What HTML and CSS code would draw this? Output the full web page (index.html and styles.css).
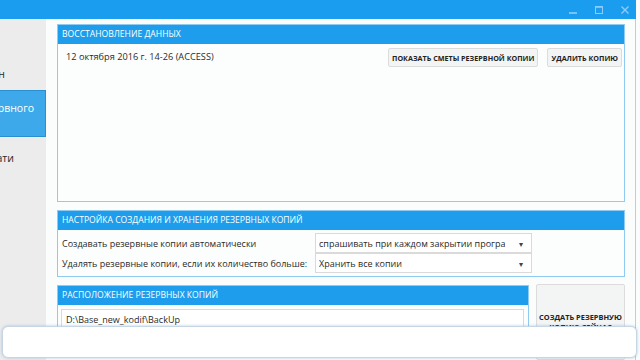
FILE: index.html
```html
<!DOCTYPE html>
<html lang="ru">
<head>
    <meta charset="UTF-8">
    <title>Резервное копирование</title>
    <link rel="stylesheet" href="styles.css">
</head>
<body>

    <div class="window">
        <!-- Title bar -->
        <div class="titlebar">
            <svg class="tb-icon" width="12" height="12" viewBox="0 0 12 12"><path d="M2 9h8" stroke="#fff" stroke-width="1.6"/></svg>
            <svg class="tb-icon" width="12" height="12" viewBox="0 0 12 12"><rect x="2.5" y="2.5" width="7" height="7" fill="none" stroke="#fff" stroke-width="1"/><path d="M2.5 3h7" stroke="#fff" stroke-width="1.6"/></svg>
            <svg class="tb-icon" width="12" height="12" viewBox="0 0 12 12"><path d="M2.5 2.5l7 7M9.5 2.5l-7 7" stroke="#fff" stroke-width="1.4"/></svg>
        </div>

        <div class="frame">
            <!-- Sidebar -->
            <div class="sidebar">
                <div class="nav-item first"><span>Синхронизация и обмен</span></div>
                <div class="nav-item active"><span>Настройка резервного</span></div>
                <div class="nav-item third"><span>Параметры печати</span></div>
            </div>

            <!-- Main content -->
            <div class="content">

                <div class="panel restore">
                    <div class="panel-head">Восстановление данных</div>
                    <div class="restore-body">
                        <div class="backup-date">12 октября 2016 г. 14-26 (ACCESS)</div>
                        <div class="btn-row">
                            <button class="btn">Показать сметы резервной копии</button>
                            <button class="btn">Удалить копию</button>
                        </div>
                    </div>
                </div>

                <div class="panel settings">
                    <div class="panel-head">Настройка создания и хранения резервных копий</div>
                    <div class="settings-grid">
                        <div class="label">Создавать резервные копии автоматически</div>
                        <div class="select"><span>спрашивать при каждом закрытии програ</span><i>&#9662;</i></div>
                        <div class="label">Удалять резервные копии, если их количество больше:</div>
                        <div class="select"><span>Хранить все копии</span><i>&#9662;</i></div>
                    </div>
                </div>

                <div class="bottom-row">
                    <div class="panel location">
                        <div class="panel-head">Расположение резервных копий</div>
                        <div class="path-box">D:\Base_new_kodif\BackUp</div>
                    </div>
                    <button class="btn big-btn">Создать резервную<br>копию сейчас</button>
                </div>

            </div>
        </div>
    </div>

    <!-- Overlay bar at the bottom -->
    <div class="overlay"></div>

</body>
</html>
```

FILE: styles.css
```css
/* Base */
body {
    margin: 0;
    padding: 0;
    width: 640px;
    height: 360px;
    overflow: hidden;
    background-color: #fbfdfd;
    font-family: 'Open Sans', 'Noto Sans', sans-serif;
    color: #2a2a2a;
    position: relative;
}

.window {
    width: 636px;
    height: 360px;
    display: flex;
    flex-direction: column;
}

/* Title bar */
.titlebar {
    height: 22px;
    background-color: #1a9cef;
    display: flex;
    justify-content: flex-end;
    align-items: center;
    gap: 14px;
    padding-right: 5px;
}

.tb-icon {
    opacity: 0.5;
}

.frame {
    flex: 1;
    display: flex;
    border-right: 1px solid #a9d4f0;
}

/* Sidebar */
.sidebar {
    width: 46px;
    background-color: #ececec;
    padding-top: 45px;
}

.nav-item {
    display: flex;
    justify-content: flex-end;
    overflow: hidden;
    white-space: nowrap;
    font-size: 10.5px;
    height: 20px;
    align-items: center;
}

.nav-item.first {
    padding-right: 41px;
}

.nav-item.active {
    margin-top: 6px;
    height: 35px;
    align-items: flex-start;
    padding-top: 10px;
    background-color: #3ea9ea;
    border: 1px solid #2a8fd0;
    border-left: none;
    color: #fff;
    padding-right: 11px;
}

.nav-item.third {
    margin-top: 11px;
    padding-right: 32px;
}

/* Main content */
.content {
    flex: 1;
    background-color: #fbfdfd;
    padding: 5px 10px 0 11px;
    display: flex;
    flex-direction: column;
    gap: 8px;
}

.panel {
    border: 1px solid #8fcaf0;
    background-color: #fcfefe;
}

.panel-head {
    height: 19px;
    line-height: 19px;
    background-color: #1d9deb;
    color: #fff;
    font-size: 8.6px;
    text-transform: uppercase;
    padding-left: 4px;
}

/* Restore panel */
.restore {
    height: 176px;
}

.restore-body {
    display: flex;
    justify-content: space-between;
    padding: 4px 2px 0 8px;
}

.backup-date {
    font-size: 9.2px;
    padding-top: 2px;
}

.btn-row {
    display: flex;
    gap: 9px;
}

.btn {
    font-family: 'Open Sans', 'Noto Sans', sans-serif;
    font-size: 7.2px;
    font-weight: bold;
    text-transform: uppercase;
    color: #222;
    background-color: #f3f4f4;
    border: 1px solid #dcdcdc;
    border-radius: 2px;
    height: 19px;
    padding: 0 3px;
}

/* Settings panel */
.settings {
    height: 65px;
}

.settings-grid {
    display: grid;
    grid-template-columns: 253px 217px;
    grid-auto-rows: 20px;
    padding: 3px 0 0 4px;
    font-size: 9px;
    align-items: center;
}

.label {
    white-space: nowrap;
}

.select {
    height: 18px;
    border: 1px solid #dadada;
    background-color: #fff;
    display: flex;
    align-items: center;
    justify-content: space-between;
    padding: 0 8px 0 3px;
    white-space: nowrap;
    overflow: hidden;
}

.select span {
    overflow: hidden;
}

.select i {
    font-style: normal;
    font-size: 8px;
    color: #444;
    margin-left: 8px;
}

/* Location panel + big button */
.bottom-row {
    display: flex;
    gap: 7px;
    align-items: flex-start;
}

.location {
    width: 470px;
    height: 60px;
}

.path-box {
    margin: 4px 4px 0 3px;
    height: 19px;
    line-height: 19px;
    border: 1px solid #dadada;
    background-color: #fff;
    font-size: 9px;
    padding-left: 4px;
}

.big-btn {
    flex: 1;
    height: 76px;
    padding: 0 1px;
    font-size: 7.4px;
    line-height: 10px;
    white-space: nowrap;
    margin-top: -1px;
}

/* Overlay */
.overlay {
    position: absolute;
    left: 2px;
    top: 326px;
    width: 633px;
    height: 30px;
    background-color: #fff;
    border: 1px solid #c6d6e4;
    border-radius: 6px;
    box-shadow: 0 0 3px rgba(80, 140, 200, 0.45);
}
```
